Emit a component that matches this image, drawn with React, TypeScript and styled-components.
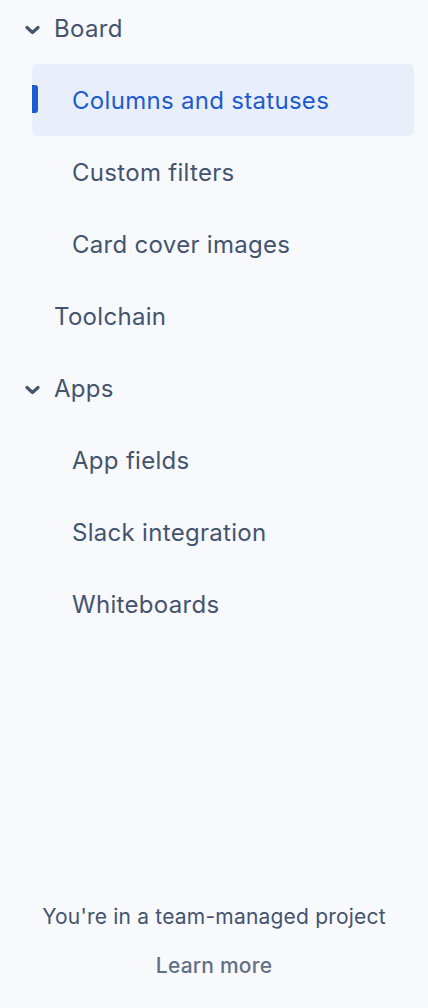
import React from 'react';
import styled, { createGlobalStyle } from 'styled-components';

const GlobalStyle = createGlobalStyle`
  html, body {
    margin: 0;
    padding: 0;
    background: #f8f9fc;
  }
  body {
    font-family: Inter, "Noto Sans", "Liberation Sans", sans-serif;
    -webkit-font-smoothing: antialiased;
  }
`

const Sidebar = styled('div')`
    height: 1008px;
    display: flex;
    flex-direction: column;
    justify-content: space-between;
    background: #f8f9fc;
    overflow: hidden;
`
const Nav = styled('nav')`
    display: flex;
    flex-direction: column;
    margin-top: -8px;
`
const Row = styled('div')<{ $depth: number; $active?: boolean }>`
    position: relative;
    height: 72px;
    display: flex;
    align-items: center;
    box-sizing: border-box;
    margin: 0 14px 0 ${p => (p.$depth === 0 ? 0 : 32)}px;
    padding-left: ${p => (p.$depth === 0 ? 54 : 40)}px;
    border-radius: 5px;
    font-size: 24px;
    letter-spacing: 0.3px;
    color: ${p => (p.$active ? '#1d5bd0' : '#44546f')};
    background: ${p => (p.$active ? '#e9effa' : 'transparent')};
`
const ActiveBar = styled('span')`
    position: absolute;
    left: 0;
    top: 21px;
    width: 6px;
    height: 28px;
    border-radius: 0 3px 3px 0;
    background: #1d5bd0;
`
const Chevron = styled('svg')`
    position: absolute;
    left: 25px;
    top: 33px;
    width: 15px;
    height: 10px;
`
const Footer = styled('div')`
    display: flex;
    flex-direction: column;
    align-items: center;
    padding-bottom: 30px;
    gap: 24px;
`
const FooterText = styled('div')`
    font-size: 21px;
    letter-spacing: 0.2px;
    color: #44546f;
`
const LearnMore = styled('a')`
    font-size: 21px;
    font-weight: 500;
    letter-spacing: 0.2px;
    color: #626f86;
    text-decoration: none;
`

type Item = { label: string; depth: number; group?: boolean; active?: boolean }

const items: Item[] = [
    { label: 'Board', depth: 0, group: true },
    { label: 'Columns and statuses', depth: 1, active: true },
    { label: 'Custom filters', depth: 1 },
    { label: 'Card cover images', depth: 1 },
    { label: 'Toolchain', depth: 0 },
    { label: 'Apps', depth: 0, group: true },
    { label: 'App fields', depth: 1 },
    { label: 'Slack integration', depth: 1 },
    { label: 'Whiteboards', depth: 1 },
]

export default function App() {
    return (
        <Sidebar>
            <GlobalStyle />
            <Nav>
                {items.map(it => (
                    <Row key={it.label} $depth={it.depth} $active={it.active}>
                        {it.active && <ActiveBar />}
                        {it.group && (
                            <Chevron viewBox="0 0 15 10">
                                <path d="M2 2.5l5.5 5 5.5-5" fill="none" stroke="#44546f" strokeWidth="3.2" strokeLinecap="round" strokeLinejoin="round" />
                            </Chevron>
                        )}
                        {it.label}
                    </Row>
                ))}
            </Nav>
            <Footer>
                <FooterText>You're in a team-managed project</FooterText>
                <LearnMore href="#">Learn more</LearnMore>
            </Footer>
        </Sidebar>
    )
}
